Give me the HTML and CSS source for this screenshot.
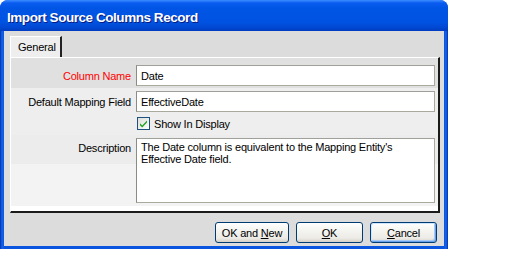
FILE: index.html
```html
<!DOCTYPE html>
<html>
<head>
    <meta charset="utf-8" />
    <title>Import Source Columns Record</title>
    <link rel="stylesheet" href="styles.css">
</head>
<body>
    <div id="ablak">
        <div id="fejlec">
            <span id="cim">Import Source Columns Record</span>
        </div>
        <div id="tartalom">
            <div id="fulek">
                <div class="ful">General</div>
            </div>
            <div id="panel">
                <div class="sor sotet">
                    <div class="cimke kotelezo">Column Name</div>
                    <div class="mezo">Date</div>
                </div>
                <div class="sor">
                    <div class="cimke">Default Mapping Field</div>
                    <div class="mezo">EffectiveDate</div>
                </div>
                <div class="sor">
                    <div class="cimke"></div>
                    <label class="jelolo">
                        <svg width="13" height="13" viewBox="0 0 13 13">
                            <defs>
                                <linearGradient id="pipa-hatter" x1="0" y1="0" x2="1" y2="1">
                                    <stop offset="0" stop-color="#dcdcd7" />
                                    <stop offset="1" stop-color="#ffffff" />
                                </linearGradient>
                            </defs>
                            <rect x="0.5" y="0.5" width="12" height="12" fill="url(#pipa-hatter)" stroke="#1c5180" />
                            <path d="M3 6.2 L5.2 8.5 L10 3.6 L10 5.6 L5.2 10.4 L3 8.2 Z" fill="#21a121" />
                        </svg>
                        <span>Show In Display</span>
                    </label>
                </div>
                <div class="sor leiras-sor">
                    <div class="cimke fent">Description</div>
                    <div class="mezo leiras">The Date column is equivalent to the Mapping Entity's Effective Date field.</div>
                </div>
            </div>
            <div id="gombok">
                <button class="gomb szeles" type="button">OK and <u>N</u>ew</button>
                <button class="gomb" type="button"><u>O</u>K</button>
                <button class="gomb alap" type="button"><u>C</u>ancel</button>
            </div>
        </div>
    </div>
</body>
</html>
```

FILE: styles.css
```css
body {
    margin: 0;
    background-color: #ffffff;
    font-family: "Liberation Sans", Arial, sans-serif;
    font-size: 11px;
    letter-spacing: -0.2px;
    color: #000000;
}
#ablak {
    width: 448px;
    height: 249px;
    box-sizing: border-box;
    padding-bottom: 3px;
    display: flex;
    flex-direction: column;
    border-radius: 8px 8px 0 0;
    background: linear-gradient(to right, #0030b0 0, #1664e8 2px, #0a55e0 4px, #0a55e0 444px, #1664e8 446px, #0030b0 448px);
    overflow: hidden;
}
#fejlec {
    height: 31px;
    flex: none;
    display: flex;
    align-items: center;
    padding-left: 7px;
    background: linear-gradient(#3c8cff 0, #0a5cf0 3px, #0055e5 8px, #0053e2 22px, #0046d0 28px, #003cc0 31px);
}
#cim {
    color: #ffffff;
    font-family: "Liberation Sans", Arial, sans-serif;
    font-weight: bold;
    font-size: 13.5px;
    letter-spacing: -0.45px;
    text-shadow: 1px 1px 0 #0a1a80;
    padding-top: 3px;
}
#tartalom {
    flex: 1;
    margin: 0 4px;
    padding: 5px 4px 0 6px;
    background-color: #dcdcdc;
    display: flex;
    flex-direction: column;
}
#fulek {
    display: flex;
    height: 21px;
}
.ful {
    width: 52px;
    box-sizing: border-box;
    padding: 4px 0 0 7px;
    background-color: #eeeeee;
    border-top: 1px solid #ffffff;
    border-left: 1px solid #ffffff;
    border-right: 2px solid #222222;
}
#panel {
    height: 156px;
    box-sizing: border-box;
    background-color: #ffffff;
    border-top: 1px solid #ffffff;
    border-left: 1px solid #ffffff;
    border-right: 2px solid #1a1a1a;
    border-bottom: 2px solid #1a1a1a;
}
.sor {
    display: grid;
    grid-template-columns: 121px 1fr;
    column-gap: 4px;
    align-items: center;
    padding: 3px 3px 2px 0;
    background-color: #eeeeee;
}
.sotet {
    background-color: #e0e0e0;
    padding-top: 7px;
}
.cimke {
    text-align: right;
    padding-right: 1px;
}
.kotelezo {
    color: #ff0000;
}
.fent {
    align-self: start;
    padding-top: 4px;
}
.mezo {
    height: 21px;
    box-sizing: border-box;
    padding: 4px 4px 0 4px;
    background-color: #ffffff;
    border: 1px solid #a9a99e;
    border-left-color: #8c8c86;
    border-top-color: #a0a09a;
}
.jelolo {
    display: flex;
    align-items: center;
    gap: 4px;
    height: 13px;
    padding: 0 0 3px 1px;
}
.jelolo svg {
    display: block;
    flex: none;
}
.leiras-sor {
    padding-bottom: 3px;
    background: linear-gradient(#ececec 0, #ececec 29px, #f3f3f3 29px);
}
.leiras {
    height: 65px;
    line-height: 12px;
    padding-top: 2px;
}
#gombok {
    display: flex;
    justify-content: flex-end;
    gap: 7px;
    padding: 9px 3px 0 0;
}
.gomb {
    width: 67px;
    height: 21px;
    padding: 0;
    font-family: "Liberation Sans", Arial, sans-serif;
    font-size: 11px;
    letter-spacing: -0.2px;
    color: #000000;
    border: 1px solid #003c74;
    border-radius: 3px;
    background: linear-gradient(#ffffff 0, #f4f4f0 40%, #ecebe6 80%, #d6d0c5 100%);
}
.szeles {
    width: 74px;
}
.alap {
    box-shadow: inset 1px 1px 0 #cee7ff, inset -1px -1px 0 #69a1e8, inset -2px -2px 0 #a7c8f5;
}
```
